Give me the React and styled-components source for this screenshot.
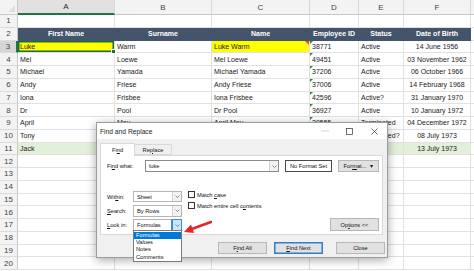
import React from "react";
import styled, { createGlobalStyle, css } from "styled-components";

const GlobalStyle = createGlobalStyle`
  html, body {
    margin: 0;
    padding: 0;
    background: #ffffff;
  }
  * {
    box-sizing: border-box;
  }
`;

const Page = styled.div`
  position: relative;
  width: 474px;
  height: 271px;
  overflow: hidden;
  background: #ffffff;
  font-family: "Liberation Sans", Arial, sans-serif;
`;

const Sheet = styled.div`
  display: grid;
  grid-template-columns: 18px 97px 97px 98px 49px 45px 67px 1fr;
  grid-template-rows: 15px repeat(20, 12.75px);
  font-size: 7px;
  color: #222;
`;

const Corner = styled.div`
  position: relative;
  background: #f3f3f3;
  border-right: 1px solid #c8c8c8;
  border-bottom: 1px solid #c8c8c8;

  &::after {
    content: "";
    position: absolute;
    right: 2px;
    bottom: 2px;
    border-left: 7px solid transparent;
    border-bottom: 7px solid #dedede;
  }
`;

const ColHead = styled.div`
  display: flex;
  align-items: center;
  justify-content: center;
  background: #f3f3f3;
  border-right: 1px solid #d8d8d8;
  border-bottom: 1px solid #c8c8c8;
  font-size: 8px;
  color: #444;
  ${(p) =>
    p.$selected &&
    css`
      background: #e1e1e1;
      border-bottom: 2px solid #217346;
      color: #2a2a2a;
    `}
`;

const RowHead = styled.div`
  display: flex;
  align-items: center;
  justify-content: center;
  background: #f3f3f3;
  border-right: 1px solid #c8c8c8;
  border-bottom: 1px solid #dcdcdc;
  font-size: 8px;
  color: #444;
  ${(p) =>
    p.$selected &&
    css`
      background: #d6d6d6;
      border-right: 2px solid #217346;
    `}
`;

const Cell = styled.div`
  position: relative;
  display: flex;
  align-items: center;
  justify-content: ${(p) => (p.$center ? "center" : "flex-start")};
  padding: 0 2px;
  white-space: nowrap;
  background: ${(p) => p.$bg || "#ffffff"};
  border-right: 1px solid #e1e1e1;
  border-bottom: 1px solid #e1e1e1;

  ${(p) =>
    p.$head &&
    css`
      background: #44546a;
      border-color: #44546a;
      color: #ffffff;
      font-weight: bold;
      justify-content: center;
    `}

  ${(p) =>
    p.$active &&
    css`
      box-shadow: inset 0 0 0 1.5px #1d6b3e;
      &::before {
        content: "";
        position: absolute;
        right: -2px;
        bottom: -2px;
        width: 3px;
        height: 3px;
        background: #1d6b3e;
        border: 0.5px solid #fff;
        z-index: 2;
      }
    `}

  ${(p) =>
    p.$flag &&
    css`
      &::after {
        content: "";
        position: absolute;
        top: 0;
        left: 0;
        border-top: 3px solid #2b8a3e;
        border-right: 3px solid transparent;
      }
    `}

  ${(p) =>
    p.$note &&
    css`
      &::after {
        content: "";
        position: absolute;
        top: 0;
        right: 0;
        border-top: 4px solid #d9541e;
        border-left: 4px solid transparent;
      }
    `}
`;

const headers = ["First Name", "Surname", "Name", "Employee ID", "Status", "Date of Birth"];

// row 10 and 11 middle cells sit under the dialog, so they stay blank
const rows = [
  ["Luke", "Warm", "Luke Warm", "38771", "Active", "14 June 1956"],
  ["Mel", "Loewe", "Mel Loewe", "49451", "Active", "03 November 1962"],
  ["Michael", "Yamada", "Michael Yamada", "37206", "Active", "06 October 1966"],
  ["Andy", "Friese", "Andy Friese", "37006", "Active", "14 February 1968"],
  ["Iona", "Frisbee", "Iona Frisbee", "42596", "Active?", "31 January 1970"],
  ["Dr", "Pool", "Dr Pool", "36927", "Active", "10 January 1972"],
  ["April", "May", "April May", "30555", "Terminated", "04 December 1972"],
  ["Tony", "", "", "", "Terminated?", "08 July 1973"],
  ["Jack", "", "", "", "", "13 July 1973"],
];

const letters = ["A", "B", "C", "D", "E", "F", ""];

/* ---------- dialog ---------- */

const Dialog = styled.div`
  position: absolute;
  left: 96px;
  top: 122px;
  width: 292px;
  height: 136px;
  display: flex;
  flex-direction: column;
  background: #f0f0f0;
  border: 1px solid #9c9c9c;
  box-shadow: 0 2px 9px rgba(0, 0, 0, 0.35);
  font-size: 5.7px;
  color: #111;
`;

const TitleBar = styled.div`
  display: flex;
  align-items: center;
  height: 16px;
  padding-left: 3px;
  background: #ffffff;
  font-size: 6.7px;
  color: #222;
`;

const WinButtons = styled.div`
  margin-left: auto;
  display: flex;
  height: 100%;
`;

const WinButton = styled.div`
  width: 25px;
  display: flex;
  align-items: center;
  justify-content: center;
`;

const Body = styled.div`
  flex: 1;
  padding: 4px 2px 0 3px;
`;

const Tabs = styled.div`
  display: flex;
  align-items: flex-end;
  height: 12px;
`;

const Tab = styled.div`
  display: flex;
  align-items: center;
  justify-content: center;
  width: ${(p) => (p.$active ? "35px" : "37px")};
  height: ${(p) => (p.$active ? "13px" : "11px")};
  margin-bottom: ${(p) => (p.$active ? "-1px" : "0")};
  background: ${(p) => (p.$active ? "#ffffff" : "#f0f0f0")};
  border: 1px solid #d9d9d9;
  border-bottom: ${(p) => (p.$active ? "none" : "1px solid #d9d9d9")};
  border-left: ${(p) => (p.$active ? "1px solid #d9d9d9" : "none")};
  position: relative;
  z-index: ${(p) => (p.$active ? 1 : 0)};
`;

const Panel = styled.div`
  width: 283px;
  height: 80px;
  padding: 4px 3px 0 6px;
  background: #ffffff;
  border: 1px solid #d9d9d9;
  display: flex;
  flex-direction: column;
`;

const FindRow = styled.div`
  display: flex;
  align-items: center;
  height: 12px;
`;

const Label = styled.div`
  width: ${(p) => p.$w || "auto"};
  display: flex;
  align-items: center;
  white-space: nowrap;
`;

const Combo = styled.div`
  position: relative;
  display: flex;
  align-items: stretch;
  width: ${(p) => p.$w};
  height: ${(p) => p.$h || "12px"};
  background: #ffffff;
  border: 1px solid ${(p) => (p.$dark ? "#8a8a8a" : "#b5b5b5")};
`;

const ComboText = styled.div`
  flex: 1;
  display: flex;
  align-items: center;
  padding-left: 3px;
`;

const ComboArrow = styled.div`
  width: 9px;
  display: flex;
  align-items: center;
  justify-content: center;
  background: ${(p) => (p.$focus ? "#cce4f7" : "#f2f2f2")};
  border-left: 1px solid ${(p) => (p.$focus ? "#3c8fd6" : "#d0d0d0")};
  ${(p) =>
    p.$focus &&
    css`
      outline: 1px solid #3c8fd6;
    `}
`;

const FormatBox = styled.div`
  margin-left: 6px;
  width: 47px;
  height: 12px;
  display: flex;
  align-items: center;
  justify-content: center;
  background: #ffffff;
  border: 1px solid #4a4a4a;
`;

const Button = styled.div`
  display: flex;
  align-items: center;
  justify-content: center;
  gap: 4px;
  width: ${(p) => p.$w || "49px"};
  height: ${(p) => p.$h || "12px"};
  margin-left: ${(p) => p.$ml || "0"};
  margin-right: ${(p) => p.$mr || "0"};
  background: #e1e1e1;
  border: 1px solid ${(p) => (p.$default ? "#2d7fd1" : "#b7b7b7")};
  white-space: nowrap;
  ${(p) =>
    p.$default &&
    css`
      box-shadow: inset 0 0 0 0.5px #2d7fd1;
    `}
`;

const Lower = styled.div`
  display: flex;
  margin-top: 19px;
  flex: 1;
`;

const OptionGrid = styled.div`
  display: grid;
  grid-template-columns: 26px 49px;
  grid-template-rows: 11px 12px 12px;
  row-gap: 2.5px;
`;

const Checks = styled.div`
  margin-left: 6px;
  display: flex;
  flex-direction: column;
  gap: 4px;
`;

const CheckRow = styled.div`
  display: flex;
  align-items: center;
  gap: 2px;
  height: 7px;
  white-space: nowrap;
`;

const Box = styled.div`
  width: 7px;
  height: 7px;
  background: #ffffff;
  border: 1px solid #333;
`;

const OptionsWrap = styled.div`
  margin-left: auto;
  align-self: flex-start;
  margin-top: 27px;
`;

const Footer = styled.div`
  display: flex;
  justify-content: flex-end;
  margin-top: 7px;
`;

const List = styled.div`
  position: absolute;
  left: -1px;
  top: 100%;
  width: 49px;
  padding: 0.5px 0;
  background: #ffffff;
  border: 1px solid #7a7a7a;
  z-index: 3;
`;

const ListItem = styled.div`
  height: 7.2px;
  display: flex;
  align-items: center;
  padding-left: 2px;
  background: ${(p) => (p.$on ? "#0078d7" : "transparent")};
  color: ${(p) => (p.$on ? "#ffffff" : "#111")};
`;

const Arrow = styled.svg`
  position: absolute;
  left: 182px;
  top: 219px;
  z-index: 5;
`;

const Chevron = () => (
  <svg width="5" height="3" viewBox="0 0 5 3">
    <path d="M0.5 0.5 L2.5 2.5 L4.5 0.5" fill="none" stroke="#666" strokeWidth="0.7" />
  </svg>
);

const Select = ({ value, focus, children }) => (
  <Combo $w="49px" $h="100%">
    <ComboText>{value}</ComboText>
    <ComboArrow $focus={focus}>
      <Chevron />
    </ComboArrow>
    {children}
  </Combo>
);

const App = () => {
  return (
    <Page>
      <GlobalStyle />
      <Sheet>
        <Corner />
        {letters.map((l, i) => (
          <ColHead key={i} $selected={l === "A"}>
            {l}
          </ColHead>
        ))}

        {Array.from({ length: 20 }, (_, r) => {
          const num = r + 1;
          const cells = [];
          for (let c = 0; c < 7; c++) {
            let content = "";
            let props = {};
            if (num === 2 && c < 6) {
              content = headers[c];
              props.$head = true;
            } else if (num >= 3 && num <= 11 && c < 6) {
              content = rows[num - 3][c];
              if (c === 5) props.$center = true;
              if (c === 3 && num < 10) props.$flag = true;
              if (num === 11) props.$bg = "#e2efda";
              if (num === 3 && (c === 0 || c === 2)) props.$bg = "#ffff00";
              if (num === 3 && c === 0) props.$active = true;
              if (num === 3 && c === 2) props.$note = true;
            }
            cells.push(
              <Cell key={c} {...props}>
                {content}
              </Cell>
            );
          }
          return (
            <React.Fragment key={num}>
              <RowHead $selected={num === 3}>{num}</RowHead>
              {cells}
            </React.Fragment>
          );
        })}
      </Sheet>

      <Dialog>
        <TitleBar>
          <span>Find and Replace</span>
          <WinButtons>
            <WinButton>
              <svg width="8" height="2" viewBox="0 0 8 2">
                <path d="M0 1 H8" stroke="#bbb" strokeWidth="0.6" />
              </svg>
            </WinButton>
            <WinButton>
              <svg width="7" height="7" viewBox="0 0 7 7">
                <rect x="0.5" y="0.5" width="6" height="6" fill="none" stroke="#333" strokeWidth="0.7" />
              </svg>
            </WinButton>
            <WinButton>
              <svg width="7" height="7" viewBox="0 0 7 7">
                <path d="M0.5 0.5 L6.5 6.5 M6.5 0.5 L0.5 6.5" stroke="#333" strokeWidth="0.7" />
              </svg>
            </WinButton>
          </WinButtons>
        </TitleBar>

        <Body>
          <Tabs>
            <Tab $active>
              <span>
                Fi<u>n</u>d
              </span>
            </Tab>
            <Tab>
              <span>
                Re<u>p</u>lace
              </span>
            </Tab>
          </Tabs>
          <Panel>
            <FindRow>
              <Label $w="38px">
                <span>
                  Fi<u>n</u>d what:
                </span>
              </Label>
              <Combo $w="134px" $dark>
                <ComboText>luke</ComboText>
                <ComboArrow>
                  <Chevron />
                </ComboArrow>
              </Combo>
              <FormatBox>No Format Set</FormatBox>
              <Button $w="41px" $ml="6px">
                <span>
                  For<u>m</u>at...
                </span>
                <span>▾</span>
              </Button>
            </FindRow>

            <Lower>
              <OptionGrid>
                <Label>
                  <span>
                    Wit<u>h</u>in:
                  </span>
                </Label>
                <Select value="Sheet" />
                <Label>
                  <span>
                    <u>S</u>earch:
                  </span>
                </Label>
                <Select value="By Rows" />
                <Label>
                  <span>
                    <u>L</u>ook in:
                  </span>
                </Label>
                <Select value="Formulas" focus>
                  <List>
                    <ListItem $on>Formulas</ListItem>
                    <ListItem>Values</ListItem>
                    <ListItem>Notes</ListItem>
                    <ListItem>Comments</ListItem>
                  </List>
                </Select>
              </OptionGrid>

              <Checks>
                <CheckRow>
                  <Box />
                  <span>
                    Match <u>c</u>ase
                  </span>
                </CheckRow>
                <CheckRow>
                  <Box />
                  <span>
                    Match entire cell c<u>o</u>ntents
                  </span>
                </CheckRow>
              </Checks>

              <OptionsWrap>
                <Button $h="13px">
                  <span>
                    Op<u>t</u>ions &lt;&lt;
                  </span>
                </Button>
              </OptionsWrap>
            </Lower>
          </Panel>

          <Footer>
            <Button $mr="7px">
              <span>
                F<u>i</u>nd All
              </span>
            </Button>
            <Button $mr="13px" $default>
              <span>
                <u>F</u>ind Next
              </span>
            </Button>
            <Button>
              <span>Close</span>
            </Button>
          </Footer>
        </Body>
      </Dialog>

      <Arrow width="30" height="16" viewBox="0 0 30 16">
        <path d="M9 10.2 L29 3" stroke="#e5252a" strokeWidth="2.6" strokeLinecap="round" />
        <polygon points="2,13 9,5.6 12,14" fill="#e5252a" />
      </Arrow>
    </Page>
  );
};

export default App;
